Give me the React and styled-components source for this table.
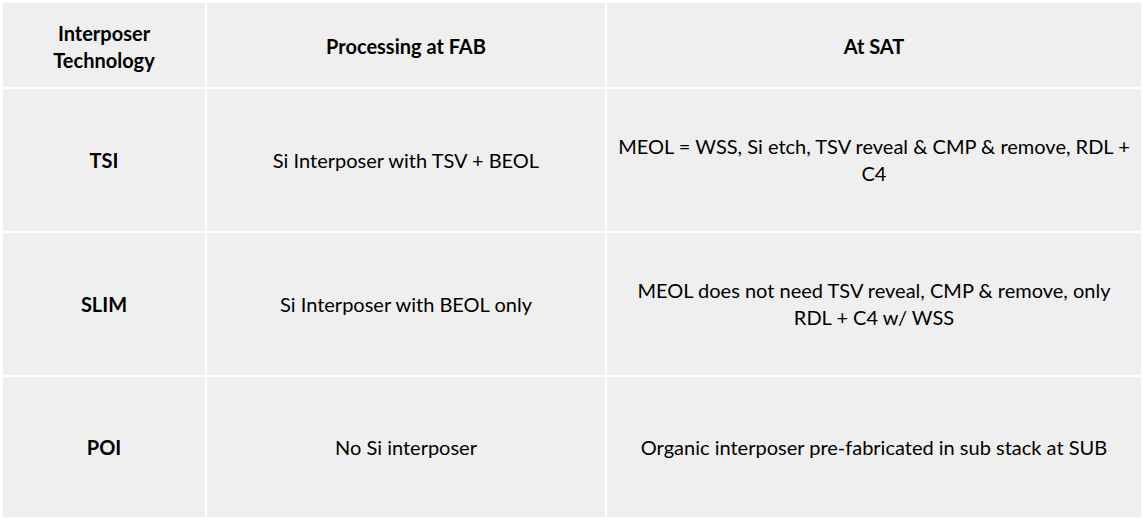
import styled, { createGlobalStyle } from 'styled-components';

const GlobalStyle = createGlobalStyle`
	html, body {
		margin: 0;
		padding: 0;
		background: #ffffff;
	}
	body {
		font-family: Lato, 'Open Sans', sans-serif;
		color: #000;
	}
`;

const Table = styled.div`
	width: 1146px;
	height: 522px;
	box-sizing: border-box;
	padding: 3px 5px 5px 3px;
	display: grid;
	grid-template-columns: 202px 398px 534px;
	grid-template-rows: 84px 142px 142px 140px;
	gap: 2px;
	background: #ffffff;
`;

const Cell = styled.div`
	background: #efefef;
	display: flex;
	align-items: center;
	justify-content: center;
	text-align: center;
	font-size: 20px;
	line-height: 27px;
	font-weight: ${(p) => (p.$bold ? 700 : 400)};
	padding-top: ${(p) => (p.$head ? '3px' : '0')};
	box-sizing: border-box;
	white-space: nowrap;
`;

const rows = [
	{
		tech: 'TSI',
		fab: 'Si Interposer with TSV + BEOL',
		sat: ['MEOL = WSS, Si etch, TSV reveal & CMP & remove, RDL +', 'C4'],
	},
	{
		tech: 'SLIM',
		fab: 'Si Interposer with BEOL only',
		sat: ['MEOL does not need TSV reveal, CMP & remove, only', 'RDL + C4 w/ WSS'],
	},
	{
		tech: 'POI',
		fab: 'No Si interposer',
		sat: ['Organic interposer pre-fabricated in sub stack at SUB'],
	},
];

function App() {
	return (
		<>
			<GlobalStyle />
			<Table>
				<Cell $bold $head>
					Interposer
					<br />
					Technology
				</Cell>
				<Cell $bold $head>Processing at FAB</Cell>
				<Cell $bold $head>At SAT</Cell>
				{rows.map((r) => [
					<Cell $bold key={r.tech + '-t'}>{r.tech}</Cell>,
					<Cell key={r.tech + '-f'}>{r.fab}</Cell>,
					<Cell key={r.tech + '-s'}>
						<div>
							{r.sat.map((line) => (
								<div key={line}>{line}</div>
							))}
						</div>
					</Cell>,
				])}
			</Table>
		</>
	);
}

export default App;
